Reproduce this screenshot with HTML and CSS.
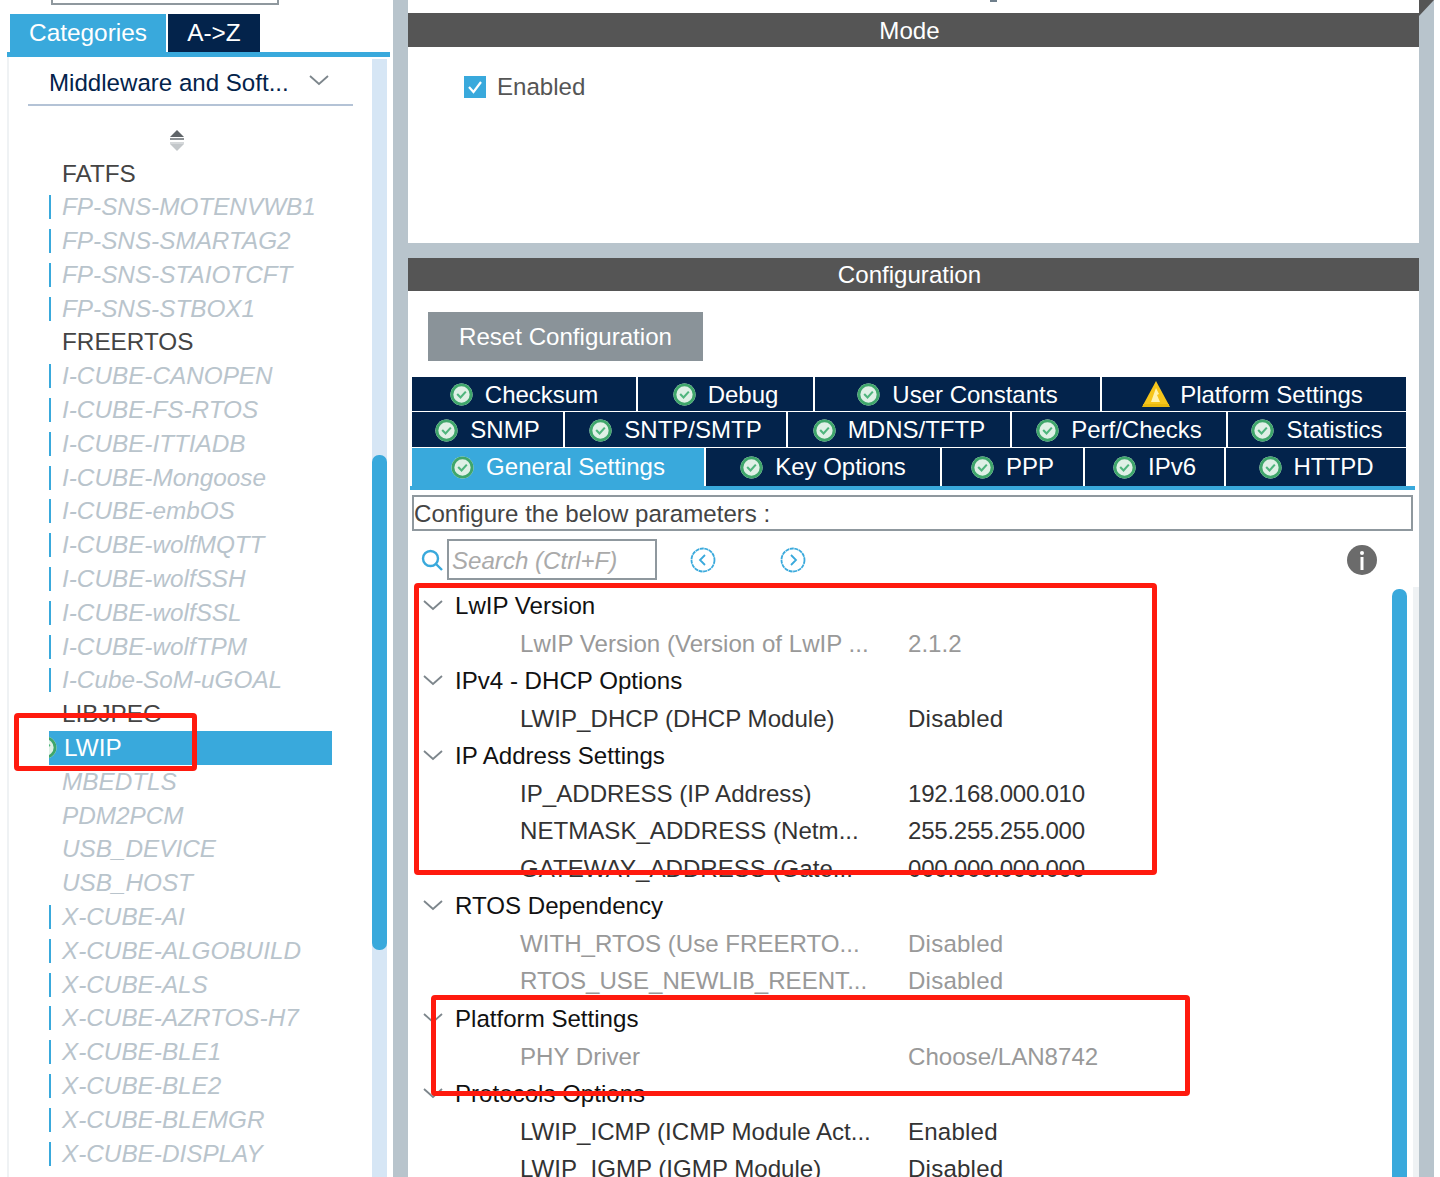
FILE: index.html
```html
<!DOCTYPE html>
<html lang="en">
<head>
<meta charset="utf-8">
<title>LWIP configuration</title>
<link rel="stylesheet" href="styles.css">
</head>
<body>
<svg class="defs" width="0" height="0" aria-hidden="true">
  <symbol id="ok" viewBox="0 0 24 24">
    <circle cx="12" cy="12" r="11.500" fill="#fff"/>
    <circle cx="12" cy="12" r="10" fill="#dff0e6" stroke="#3fa66b" stroke-width="3"/>
    <path d="M7.500 11.500l3.500 3.500 5.500-6" fill="none" stroke="#4fb57d" stroke-width="2.200"/>
  </symbol>
  <symbol id="chev" viewBox="0 0 20 12">
    <path d="M1 2l9 8 9-8" fill="none" stroke="#7d868c" stroke-width="1.800"/>
  </symbol>
</svg>
<div class="app">
  <aside class="left">
    <div class="old-box"></div>
    <div class="cat-tabs">
      <div class="cat-tab on">Categories</div>
      <div class="cat-tab">A-&gt;Z</div>
    </div>
    <div class="cat-rule"></div>
    <div class="left-body">
      <div class="left-main">
        <div class="dropdown">
          <span>Middleware and Soft...</span>
          <svg class="dd-chev"><use href="#chev"/></svg>
        </div>
        <svg class="sorter" viewBox="0 0 18 22" width="18" height="22">
          <path d="M9 1l7 7H2z" fill="#5f6468"/><rect x="2" y="9" width="14" height="2" fill="#8b9094"/>
          <rect x="2" y="13" width="14" height="2" fill="#d5d8da"/><path d="M2 15h14l-7 7z" fill="#c3c7ca"/>
        </svg>
        <ul class="list">
          <li class="plain">FATFS</li>
          <li class="pack">FP-SNS-MOTENVWB1</li>
          <li class="pack">FP-SNS-SMARTAG2</li>
          <li class="pack">FP-SNS-STAIOTCFT</li>
          <li class="pack">FP-SNS-STBOX1</li>
          <li class="plain">FREERTOS</li>
          <li class="pack">I-CUBE-CANOPEN</li>
          <li class="pack">I-CUBE-FS-RTOS</li>
          <li class="pack">I-CUBE-ITTIADB</li>
          <li class="pack">I-CUBE-Mongoose</li>
          <li class="pack">I-CUBE-embOS</li>
          <li class="pack">I-CUBE-wolfMQTT</li>
          <li class="pack">I-CUBE-wolfSSH</li>
          <li class="pack">I-CUBE-wolfSSL</li>
          <li class="pack">I-CUBE-wolfTPM</li>
          <li class="pack">I-Cube-SoM-uGOAL</li>
          <li class="plain">LIBJPEG</li>
          <li class="sel"><svg class="sel-ok"><use href="#ok"/></svg>LWIP</li>
          <li class="off">MBEDTLS</li>
          <li class="off">PDM2PCM</li>
          <li class="off">USB_DEVICE</li>
          <li class="off">USB_HOST</li>
          <li class="pack">X-CUBE-AI</li>
          <li class="pack">X-CUBE-ALGOBUILD</li>
          <li class="pack">X-CUBE-ALS</li>
          <li class="pack">X-CUBE-AZRTOS-H7</li>
          <li class="pack">X-CUBE-BLE1</li>
          <li class="pack">X-CUBE-BLE2</li>
          <li class="pack">X-CUBE-BLEMGR</li>
          <li class="pack">X-CUBE-DISPLAY</li>
        </ul>
      </div>
      <div class="left-track"><div class="left-thumb"></div></div>
    </div>
  </aside>

  <div class="gutter"></div>

  <main class="right">
    <div class="top-gap"></div>
    <h2 class="bar">Mode</h2>
    <section class="mode">
      <label class="enabled">
        <svg class="check" viewBox="0 0 22 22" width="22" height="22"><rect width="22" height="22" fill="#39a9dc"/><path d="M5 11l4.500 5L17 6" fill="none" stroke="#fff" stroke-width="2.200"/></svg>
        Enabled
      </label>
    </section>
    <div class="band"></div>
    <h2 class="bar bar-config">Configuration</h2>
    <section class="config">
      <div class="reset">Reset Configuration</div>
      <div class="tabrow r1">
        <div class="tab"><svg class="ok"><use href="#ok"/></svg>Checksum</div>
        <div class="tab"><svg class="ok"><use href="#ok"/></svg>Debug</div>
        <div class="tab"><svg class="ok"><use href="#ok"/></svg>User Constants</div>
        <div class="tab tab-warn"><svg class="warn" viewBox="0 0 30 28" width="30" height="28"><path d="M15 1L29 27H1z" fill="#f6c51b"/><path d="M15 8l-5 14h9l-3-7 2-1z" fill="#fff3b0"/><path d="M2 24h26v3H2z" fill="#e8b80f"/></svg>Platform Settings</div>
      </div>
      <div class="tabrow r2">
        <div class="tab"><svg class="ok"><use href="#ok"/></svg>SNMP</div>
        <div class="tab"><svg class="ok"><use href="#ok"/></svg>SNTP/SMTP</div>
        <div class="tab"><svg class="ok"><use href="#ok"/></svg>MDNS/TFTP</div>
        <div class="tab"><svg class="ok"><use href="#ok"/></svg>Perf/Checks</div>
        <div class="tab"><svg class="ok"><use href="#ok"/></svg>Statistics</div>
      </div>
      <div class="tabrow r3">
        <div class="tab on"><svg class="ok"><use href="#ok"/></svg>General Settings</div>
        <div class="tab"><svg class="ok"><use href="#ok"/></svg>Key Options</div>
        <div class="tab"><svg class="ok"><use href="#ok"/></svg>PPP</div>
        <div class="tab"><svg class="ok"><use href="#ok"/></svg>IPv6</div>
        <div class="tab"><svg class="ok"><use href="#ok"/></svg>HTTPD</div>
      </div>
      <div class="tab-rule"></div>
      <div class="params">Configure the below parameters :</div>
      <div class="searchrow">
        <svg class="mag" viewBox="0 0 22 22" width="22" height="22"><circle cx="9.500" cy="9.500" r="7.500" fill="none" stroke="#39a9dc" stroke-width="2.400"/><path d="M15 15l6 6" stroke="#39a9dc" stroke-width="2.400"/></svg>
        <div class="search">Search (Ctrl+F)</div>
        <svg class="nav nav-prev" viewBox="0 0 26 26" width="26" height="26"><circle cx="13" cy="13" r="11.500" fill="none" stroke="#39a9dc" stroke-width="1.800" stroke-dasharray="4 .6"/><path d="M15 8l-5 5 5 5" fill="none" stroke="#39a9dc" stroke-width="1.800"/></svg>
        <svg class="nav nav-next" viewBox="0 0 26 26" width="26" height="26"><circle cx="13" cy="13" r="11.500" fill="none" stroke="#39a9dc" stroke-width="1.800" stroke-dasharray="4 .6"/><path d="M11 8l5 5-5 5" fill="none" stroke="#39a9dc" stroke-width="1.800"/></svg>
        <svg class="info" viewBox="0 0 30 30" width="30" height="30"><circle cx="15" cy="15" r="15" fill="#6b6b6b"/><rect x="13.500" y="12" width="3" height="13" fill="#fff"/><circle cx="15" cy="8" r="2" fill="#fff"/></svg>
      </div>
      <div class="tree-wrap">
        <div class="tree">
          <div class="group"><svg class="tw"><use href="#chev"/></svg>LwIP Version</div>
          <div class="leaf dim"><span class="k">LwIP Version (Version of LwIP ...</span><span>2.1.2</span></div>
          <div class="group"><svg class="tw"><use href="#chev"/></svg>IPv4 - DHCP Options</div>
          <div class="leaf"><span class="k">LWIP_DHCP (DHCP Module)</span><span class="v">Disabled</span></div>
          <div class="group"><svg class="tw"><use href="#chev"/></svg>IP Address Settings</div>
          <div class="leaf"><span class="k">IP_ADDRESS (IP Address)</span><span class="num">192.168.000.010</span></div>
          <div class="leaf"><span class="k">NETMASK_ADDRESS (Netm...</span><span class="num">255.255.255.000</span></div>
          <div class="leaf"><span class="k">GATEWAY_ADDRESS (Gate...</span><span class="num">000.000.000.000</span></div>
          <div class="group"><svg class="tw"><use href="#chev"/></svg>RTOS Dependency</div>
          <div class="leaf dim"><span class="k">WITH_RTOS (Use FREERTO...</span><span class="v">Disabled</span></div>
          <div class="leaf dim"><span class="k">RTOS_USE_NEWLIB_REENT...</span><span class="v">Disabled</span></div>
          <div class="group"><svg class="tw"><use href="#chev"/></svg>Platform Settings</div>
          <div class="leaf dim"><span class="k">PHY Driver</span><span>Choose/LAN8742</span></div>
          <div class="group"><svg class="tw"><use href="#chev"/></svg>Protocols Options</div>
          <div class="leaf"><span class="k">LWIP_ICMP (ICMP Module Act...</span><span class="v">Enabled</span></div>
          <div class="leaf"><span class="k">LWIP_IGMP (IGMP Module)</span><span class="v">Disabled</span></div>
        </div>
        <div class="tree-thumb"></div>
      </div>
    </section>
  </main>

  <div class="gutter gutter-r"><svg class="corner" viewBox="0 0 15 16" width="15" height="16"><path d="M0 0h15L0 16z" fill="#555"/></svg></div>
</div>

<div class="mark mark-a"></div>
<div class="mark mark-b"></div>
<div class="mark mark-c"></div>
</body>
</html>
```
FILE: styles.css
```css
* { box-sizing: border-box; }
html, body { margin: 0; padding: 0; height: 1177px; overflow: hidden; background: #fff; }
body { position: relative; font-family: "Liberation Sans", Arial, sans-serif; font-size: 24.1px; color: #444; }
.defs { position: absolute; }

.app { display: flex; height: 1177px; overflow: hidden; }

/* left column */
.left { width: 393px; flex: none; display: flex; flex-direction: column; height: 1177px; overflow: hidden; }
.old-box { width: 228px; height: 5px; margin-left: 51px; border: 2px solid #8f989e; border-top: 0; }
.cat-tabs { display: flex; gap: 2px; margin: 9px 0 0 10px; height: 38px; }
.cat-tab { background: #03234b; color: #fff; height: 38px; line-height: 38px; width: 92px; text-align: center; font-size: 24.4px; }
.cat-tab.on { background: #39a9dc; width: 156px; }
.cat-rule { height: 5px; width: 383px; margin-left: 7px; background: #39a9dc; }
.left-body { display: flex; flex: 1; min-height: 0; margin-left: 7px; width: 383px; border-left: 2px solid #eff2f4; }
.left-main { flex: 1; min-width: 0; }
.dropdown { margin: 0 19px 0 19px; height: 49px; border-bottom: 2px solid #b4c3d6; padding: 7px 0 0 21px; position: relative; color: #03234b; line-height: 38px; }
.dd-chev { position: absolute; left: 281px; top: 17px; width: 20px; height: 12px; }
.sorter { display: block; margin: 23px 0 0 159px; }
.list { list-style: none; margin: 5.5px 0 0; padding: 0; font-size: 24.3px; }
.list li { height: 33.8px; line-height: 33.8px; padding-left: 53px; white-space: nowrap; position: relative; }
.list .plain { color: #444; }
.list .pack, .list .off { color: #b9c4cc; font-style: italic; }
.list .pack::before { content: ""; position: absolute; left: 40px; top: 5px; width: 2px; height: 24px; background: #39a9dc; }
.list .sel { background: #39a9dc; color: #fff; margin-left: 40px; width: 283px; padding-left: 15px; }
.sel-ok { position: absolute; left: -15px; top: 5px; width: 23px; height: 23px; clip-path: inset(0 0 0 15px); }
.left-track { width: 15px; flex: none; margin: 2px 3px 0 0; background: #d6e6f5; position: relative; }
.left-thumb { margin-top: 396px; height: 495px; background: #39a9dc; border-radius: 7px; }

/* gutters */
.gutter { width: 15px; flex: none; background: #b8c4cc; }
.gutter-r { position: relative; }
.corner { display: block; }

/* right column */
.right { width: 1011px; flex: none; height: 1177px; overflow: hidden; }
.top-gap { height: 13px; padding-left: 582px; }
.top-gap::before { content: ""; display: block; width: 7px; height: 2px; background: #6f7f8c; }
.bar { margin: 0; height: 34px; line-height: 36px; background: #555; color: #fff; font-weight: 400; font-size: 24.1px; text-align: center; padding-right: 8px; }
.mode { height: 196px; padding: 29px 0 0 56px; }
.enabled { display: flex; align-items: center; gap: 11px; color: #555; line-height: 22px; }
.check { flex: none; }
.band { height: 15px; background: #b8c4cc; }
.bar-config { height: 33px; line-height: 34px; }
.config { padding-top: 21px; }
.reset { width: 275px; height: 49px; margin-left: 20px; background: #8a9399; color: #fff; line-height: 50px; text-align: center; }
.tabrow { display: grid; gap: 2px; margin: 0 13px 0 4px; background: #fff; font-size: 24px; }
.r1 { margin-top: 16px; height: 34px; grid-template-columns: 224px 175px 285px 304px; }
.r2 { margin-top: 1px; height: 35px; grid-template-columns: 151px 221px 222px 214px 178px; }
.r3 { margin-top: 0; height: 39px; padding-top: 1px; grid-template-columns: 292px 234px 141px 139px 180px; }
.tab { background: #03234b; color: #fff; display: flex; align-items: center; justify-content: center; gap: 12px; white-space: nowrap; padding-top: 1px; }
.r3 .tab { padding-top: 0; }
.tab.on { background: #39a9dc; }
.tab-warn { padding-right: 4px; }
.ok { width: 23px; height: 23px; flex: none; }
.warn { flex: none; margin: -2px -3px 0 0; }
.tab-rule { height: 4px; margin: 0 4px 0 2px; background: #39a9dc; }
.params { margin: 5px 6px 0 4px; height: 36px; border: 2px solid #8f989e; line-height: 34px; color: #444; white-space: nowrap; }
.searchrow { display: flex; align-items: center; height: 41px; margin-top: 8px; padding-left: 13px; }
.mag { flex: none; margin-top: 1px; }
.search { width: 210px; height: 41px; margin-left: 4px; border: 2px solid #8f989e; color: #aaa; font-style: italic; line-height: 39px; padding-left: 3px; }
.nav { flex: none; }
.nav-prev { margin-left: 33px; }
.nav-next { margin-left: 64px; }
.info { flex: none; margin-left: 541px; }
.tree-wrap { display: flex; margin-top: 7px; border-right: 6px solid #eff2f4; height: 600px; }
.tree { flex: 1; min-width: 0; }
.group, .leaf { height: 37.55px; line-height: 37.55px; white-space: nowrap; }
.group { color: #111; padding-left: 47px; position: relative; }
.tw { position: absolute; left: 15px; top: 12px; width: 20px; height: 12px; }
.leaf { display: flex; padding-left: 112px; color: #333; }
.leaf .k { width: 388px; flex: none; }
.leaf .num { letter-spacing: -0.27px; }
.leaf .v { letter-spacing: 0.2px; }
.dim { color: #999; }
.tree-thumb { width: 15px; flex: none; margin-right: 6px; margin-top: 2px; background: #39a9dc; border-radius: 7px 7px 0 0; }

/* red annotation boxes drawn over the screenshot */
.mark { position: absolute; border: 5px solid #ff1a0e; border-radius: 4px; pointer-events: none; }
.mark-a { left: 414px; top: 583px; width: 743px; height: 292px; }
.mark-b { left: 431px; top: 995px; width: 759px; height: 101px; }
.mark-c { left: 14px; top: 713px; width: 183px; height: 58px; }
```
